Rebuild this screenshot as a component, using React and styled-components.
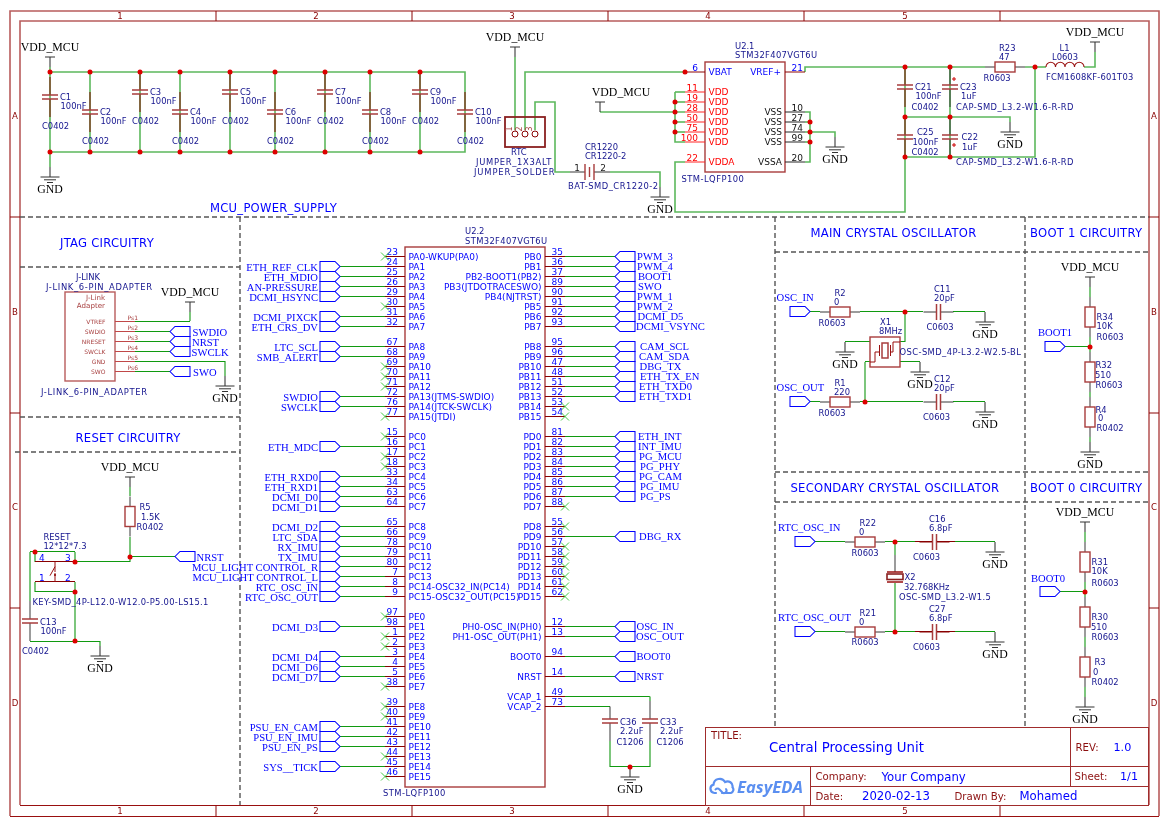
import React from 'react'
import styled, { createGlobalStyle } from 'styled-components'

const Global = createGlobalStyle`
  html, body { margin: 0; padding: 0; background: #fff; }
`
const Page = styled.div`
  position: relative;
  width: 1169px;
  height: 827px;
  overflow: hidden;
  background: #fff;
  filter: blur(0.4px);
`
const Sheet = styled.svg`
  display: block;
`

// sheet text
const PartText = styled.text`
  font: 8.4px "DejaVu Sans", sans-serif;
  fill: #14148e;
  letter-spacing: ${p => p.$spread || 0}px;
`
const PinName = styled.text`
  font: 9px "DejaVu Sans", sans-serif;
  fill: ${p => p.$color || '#0000ff'};
  text-anchor: ${p => p.$anchor || 'start'};
`
const PinNum = styled.text`
  font: 9px "DejaVu Sans", sans-serif;
  fill: ${p => p.$color || '#0000ff'};
  text-anchor: ${p => p.$anchor || 'start'};
`
const NetText = styled.text`
  font: 10.6px "Liberation Serif", serif;
  fill: #0000ff;
  text-anchor: ${p => p.$anchor || 'start'};
`
const PowerText = styled.text`
  font: 11.8px "Liberation Serif", serif;
  fill: #000;
  text-anchor: middle;
`
const Heading = styled.text`
  font: 11.6px "DejaVu Sans", sans-serif;
  fill: #0000ff;
  letter-spacing: 0.25px;
`
const FrameText = styled.text`
  font: 8.6px "DejaVu Sans", sans-serif;
  fill: #880000;
  text-anchor: middle;
`
const AdapterText = styled.text`
  font: ${p => p.$size || 6}px "DejaVu Sans", sans-serif;
  fill: #a84040;
  text-anchor: ${p => p.$anchor || 'end'};
`

// sheet lines: lines on a whole coordinate come out wide and pale, lines on a half one thin and dark
const Wire = styled.polyline`
  fill: none;
  stroke: #5cb85c;
  stroke-width: 1.6;
`
const CrispWire = styled.polyline`
  fill: none;
  stroke: #109a10;
  stroke-width: 1.05;
`
const Pin = styled.line`
  stroke: ${p => p.$color || '#880000'};
  stroke-width: ${p => (p.$crisp ? 1.05 : 1.5)};
  opacity: ${p => (p.$crisp ? 1 : 0.65)};
`
const FrameLine = styled.polyline`
  fill: none;
  stroke: #b85c5c;
  stroke-width: 1.6;
`
const DarkFrameLine = styled.polyline`
  fill: none;
  stroke: #990f0f;
  stroke-width: 1.05;
`
const Dashed = styled.line`
  stroke: #555;
  stroke-width: 1.4;
  stroke-dasharray: 5 3;
`
const Body = styled.rect`
  fill: none;
  stroke: ${p => p.$color || '#a83c3c'};
  stroke-width: ${p => p.$w || 1.4};
`
const PortShape = styled.polygon`
  fill: none;
  stroke: #0000ff;
  stroke-width: 1.05;
`
const Mark = styled.path`
  fill: none;
  stroke: ${p => p.$color || '#990f0f'};
  stroke-width: ${p => p.$w || 1};
`
const Junction = styled.circle`
  fill: #dd0000;
`

// title block, lies over the sheet corner
const TitleBlock = styled.div`
  position: absolute;
  left: 705px;
  top: 727px;
  width: 444px;
  height: 79px;
  box-sizing: border-box;
  display: grid;
  grid-template-columns: 104.5px 260px 1fr;
  grid-template-rows: 39px 20px 1fr;
  border: 1px solid #a02c2c;
  background: #fff;
  font-family: "DejaVu Sans", sans-serif;
`
const Cell = styled.div`
  box-sizing: border-box;
  display: grid;
  align-items: center;
  grid-template-columns: ${p => p.$cols || '1fr'};
  padding-left: ${p => p.$pad || 5}px;
  grid-column: ${p => p.$col};
  grid-row: ${p => p.$row};
  border-right: ${p => (p.$right ? '1px solid #a02c2c' : 'none')};
  border-bottom: ${p => (p.$bottom ? '1px solid #a02c2c' : 'none')};
  min-width: 0;
`
const TitleCell = styled(Cell)`
  align-content: start;
  padding-top: 2px;
`
const Caption = styled.span`
  font-size: 10.2px;
  color: #8c1010;
  white-space: nowrap;
`
const Value = styled.span`
  font-size: ${p => p.$size || 11.7}px;
  color: #0000ff;
  white-space: nowrap;
`
const MainTitle = styled(Value)`
  padding-left: 58px;
  line-height: 15px;
  margin-top: -1px;
`
const LogoCell = styled(Cell)`
  grid-template-columns: 27px 1fr;
  padding-left: 3px;
  gap: 1px;
`
const LogoText = styled.span`
  font: italic 700 16.6px "Open Sans", sans-serif;
  color: #5b8ff0;
`

const Cap = ({ x, y, pin = '#880000', flat, up = 20 }) =>
  flat ? (
    <g>
      <Pin x1={x - 15} y1={y} x2={x - 2} y2={y} $color={pin} />
      <Pin x1={x + 2} y1={y} x2={x + 15} y2={y} $color={pin} />
      <Mark d={`M${x - 2} ${y - 8}V${y + 8}M${x + 2} ${y - 8}V${y + 8}`} $color="#a83c3c" $w={1.5} />
    </g>
  ) : (
    <g>
      <Pin x1={x} y1={y - up} x2={x} y2={y - 2} $color={pin} />
      <Pin x1={x} y1={y + 2} x2={x} y2={y + 20} $color={pin} />
      <Mark d={`M${x - 8} ${y - 2}H${x + 8}M${x - 8} ${y + 2}H${x + 8}`} $color="#a83c3c" $w={1.5} />
    </g>
  )

const Res = ({ x, y, flat }) =>
  flat ? (
    <g>
      <Pin x1={x - 20} y1={y} x2={x - 10} y2={y} $color="#333" />
      <Pin x1={x + 10} y1={y} x2={x + 20} y2={y} $color="#333" />
      <Body x={x - 10} y={y - 5} width={20} height={10} />
    </g>
  ) : (
    <g>
      <Pin x1={x} y1={y - 20} x2={x} y2={y - 10} $color="#333" />
      <Pin x1={x} y1={y + 10} x2={x} y2={y + 20} $color="#333" />
      <Body x={x - 5} y={y - 10} width={10} height={20} />
    </g>
  )

const Gnd = ({ x, y }) => (
  <g>
    <Pin x1={x} y1={y - 10} x2={x} y2={y} $color="#222" />
    <Mark d={`M${x - 9.5} ${y}H${x + 9.5}M${x - 6} ${y + 2.8}H${x + 6}M${x - 3} ${y + 5.5}H${x + 3}`} $color="#333" />
    <PowerText x={x} y={y + 16}>GND</PowerText>
  </g>
)

const Vdd = ({ x, y, tx, ty }) => (
  <g>
    <Pin x1={x} y1={y} x2={x} y2={y + 10} $color="#222" />
    <Mark d={`M${x - 5} ${y}H${x + 5}`} $color="#333" />
    <PowerText x={tx ?? x} y={ty ?? y - 6}>VDD_MCU</PowerText>
  </g>
)

// port with its tip to the right
const PortRight = ({ x, y }) => (
  <PortShape points={`${x - 20},${y - 5} ${x - 5},${y - 5} ${x},${y} ${x - 5},${y + 5} ${x - 20},${y + 5}`} />
)
// port with its tip to the left
const PortLeft = ({ x, y }) => (
  <PortShape points={`${x},${y} ${x + 5},${y - 5} ${x + 20},${y - 5} ${x + 20},${y + 5} ${x + 5},${y + 5}`} />
)
const NoConnect = ({ x, y }) => (
  <Mark d={`M${x - 4} ${y - 4}L${x + 4} ${y + 4}M${x - 4} ${y + 4}L${x + 4} ${y - 4}`} $color="#44cc44" />
)

const LEFT_PINS = [
  [257, [
    ['23', 'PA0-WKUP(PA0)'], ['24', 'PA1', 'ETH_REF_CLK'], ['25', 'PA2', 'ETH_MDIO'], ['26', 'PA3', 'AN-PRESSURE'],
    ['29', 'PA4', 'DCMI_HSYNC'], ['30', 'PA5'], ['31', 'PA6', 'DCMI_PIXCK'], ['32', 'PA7', 'ETH_CRS_DV'],
  ]],
  [347, [
    ['67', 'PA8', 'LTC_SCL'], ['68', 'PA9', 'SMB_ALERT'], ['69', 'PA10'], ['70', 'PA11'], ['71', 'PA12'],
    ['72', 'PA13(JTMS-SWDIO)', 'SWDIO'], ['76', 'PA14(JTCK-SWCLK)', 'SWCLK'], ['77', 'PA15(JTDI)'],
  ]],
  [437, [
    ['15', 'PC0'], ['16', 'PC1', 'ETH_MDC'], ['17', 'PC2'], ['18', 'PC3'], ['33', 'PC4', 'ETH_RXD0'],
    ['34', 'PC5', 'ETH_RXD1'], ['63', 'PC6', 'DCMI_D0'], ['64', 'PC7', 'DCMI_D1'],
  ]],
  [527, [
    ['65', 'PC8', 'DCMI_D2'], ['66', 'PC9', 'LTC_SDA'], ['78', 'PC10', 'RX_IMU'], ['79', 'PC11', 'TX_IMU'],
    ['80', 'PC12', 'MCU_LIGHT CONTROL_R'], ['7', 'PC13', 'MCU_LIGHT CONTROL_L'],
    ['8', 'PC14-OSC32_IN(PC14)', 'RTC_OSC_IN'], ['9', 'PC15-OSC32_OUT(PC15)', 'RTC_OSC_OUT'],
  ]],
  [617, [
    ['97', 'PE0'], ['98', 'PE1', 'DCMI_D3'], ['1', 'PE2'], ['2', 'PE3'], ['3', 'PE4', 'DCMI_D4'],
    ['4', 'PE5', 'DCMI_D6'], ['5', 'PE6', 'DCMI_D7'], ['38', 'PE7'],
  ]],
  [707, [
    ['39', 'PE8'], ['40', 'PE9'], ['41', 'PE10', 'PSU_EN_CAM'], ['42', 'PE11', 'PSU_EN_IMU'],
    ['43', 'PE12', 'PSU_EN_PS'], ['44', 'PE13'], ['45', 'PE14', 'SYS__TICK'], ['46', 'PE15'],
  ]],
]

const RIGHT_PINS = [
  [257, [
    ['35', 'PB0', 'PWM_3', 637], ['36', 'PB1', 'PWM_4', 637], ['37', 'PB2-BOOT1(PB2)', 'BOOT1', 638],
    ['89', 'PB3(JTDOTRACESWO)', 'SWO', 638], ['90', 'PB4(NJTRST)', 'PWM_1', 637], ['91', 'PB5', 'PWM_2', 637],
    ['92', 'PB6', 'DCMI_D5', 637.5], ['93', 'PB7', 'DCMI_VSYNC', 636],
  ]],
  [347, [
    ['95', 'PB8', 'CAM_SCL', 640], ['96', 'PB9', 'CAM_SDA', 639], ['47', 'PB10', 'DBG_TX', 639.5],
    ['48', 'PB11', 'ETH_TX_EN', 640], ['51', 'PB12', 'ETH_TXD0', 639], ['52', 'PB13', 'ETH_TXD1', 639],
    ['53', 'PB14'], ['54', 'PB15'],
  ]],
  [437, [
    ['81', 'PD0', 'ETH_INT', 638], ['82', 'PD1', 'INT_IMU', 638], ['83', 'PD2', 'PG_MCU', 639],
    ['84', 'PD3', 'PG_PHY', 640], ['85', 'PD4', 'PG_CAM', 639], ['86', 'PD5', 'PG_IMU', 640],
    ['87', 'PD6', 'PG_PS', 640], ['88', 'PD7'],
  ]],
  [527, [
    ['55', 'PD8'], ['56', 'PD9', 'DBG_RX', 639], ['57', 'PD10'], ['58', 'PD11'], ['59', 'PD12'],
    ['60', 'PD13'], ['61', 'PD14'], ['62', 'PD15'],
  ]],
  [627, [['12', 'PH0-OSC_IN(PH0)', 'OSC_IN', 636.5], ['13', 'PH1-OSC_OUT(PH1)', 'OSC_OUT', 636]]],
  [657, [['94', 'BOOT0', 'BOOT0', 636.5]]],
  [677, [['14', 'NRST', 'NRST', 636.5]]],
]

const WIRES = [
  // decoupling rails
  '50,67 50,167', '90,72 90,152', '140,72 140,152', '180,72 180,152', '230,72 230,152', '275,72 275,152',
  '325,72 325,152', '370,72 370,152', '420,72 420,152',
  '50,72 465,72 465,152 50,152',
  // rtc jumper and battery
  '515,57 515,130', '525,130 525,72 685,72', '535,130 535,102 555,102 555,172 570,172', '610,172 660,172 660,187',
  // power of the mcu
  '600,112 685,112', '675,92 685,92', '675,92 675,142 685,142', '675,102 685,102', '675,122 685,122', '675,132 685,132',
  '685,162 675,162 675,212 905,212 905,157',
  '805,112 810,112 810,162 805,162', '805,122 810,122', '805,132 835,132 835,137', '805,142 810,142',
  '805,72 805,67 985,67', '905,67 905,157', '950,67 950,157', '905,117 1010,117 1010,122',
  '905,157 1035,157 1035,67 1025,67', '1035,67 1046,67', '1084,67 1095,67 1095,52',
  // verticals of the lower sheet
  '190,321 190,312', '225,361 225,376',
  '130,487 130,496', '130,537 130,562', '35,552 35,562', '75,552 75,562', '30,552 30,601',
  '100,641 100,646', '75,641 75,582', '35,582 35,592',
  '905,312 905,342', '845,342 845,342', '865,362 865,402',
  '1090,287 1090,297', '1090,337 1090,352', '1090,392 1090,397', '1090,437 1090,442',
  '895,542 895,555', '895,583 895,632',
  '1085,532 1085,542', '1085,582 1085,597', '1085,637 1085,647', '1085,687 1085,697',
  '610,741 610,767', '650,741 650,767',
]

const CRISP_WIRES = [
  // jtag
  '135,321.5 190,321.5', '135,331.5 170,331.5', '135,341.5 170,341.5', '135,351.5 170,351.5', '135,361.5 225,361.5', '135,371.5 170,371.5',
  // reset
  '130,556.5 175,556.5', '130,561.5 35,561.5', '35,551.5 75,551.5', '35,551.5 30,551.5', '30,641.5 100,641.5', '35,591.5 75,591.5',
  // main crystal
  '810,311.5 820,311.5', '860,311.5 923,311.5', '953,311.5 985,311.5', '905,341.5 900,341.5',
  '870,341.5 845,341.5', '870,361.5 865,361.5', '900,361.5 920,361.5',
  '810,401.5 820,401.5', '860,401.5 923,401.5', '953,401.5 985,401.5',
  '1065,346.5 1090,346.5',
  // secondary crystal
  '815,541.5 845,541.5', '885,541.5 915,541.5', '955,541.5 995,541.5',
  '815,631.5 845,631.5', '885,631.5 915,631.5', '955,631.5 995,631.5',
  '1060,591.5 1085,591.5',
  // vcap
  '610,766.5 650,766.5', '565,696.5 650,696.5', '565,706.5 610,706.5',
]

const DOTS = [
  [50, 72], [90, 72], [140, 72], [180, 72], [230, 72], [275, 72], [325, 72], [370, 72], [420, 72],
  [50, 152], [90, 152], [140, 152], [180, 152], [230, 152], [275, 152], [325, 152], [370, 152], [420, 152],
  [685, 72], [675, 102], [675, 112], [675, 122], [675, 132], [810, 122], [810, 132], [810, 142],
  [905, 67], [950, 67], [1035, 67], [905, 117], [950, 117], [905, 157], [950, 157],
  [130, 557], [75, 562], [35, 552], [75, 592], [75, 641],
  [905, 312], [865, 402], [1090, 347], [895, 542], [895, 632], [1085, 592], [630, 767],
]

const CAPS = [
  [50, 97], [90, 112], [140, 92], [180, 112], [230, 92], [275, 112], [325, 92], [370, 112], [420, 92], [465, 112],
  [905, 87], [905, 137],
]

const DECOUPLING_TEXT = [
  ['C1', 60, 100], ['C2', 100, 115], ['C3', 150, 95], ['C4', 190, 115], ['C5', 240, 95],
  ['C6', 285, 115], ['C7', 335, 95], ['C8', 380, 115], ['C9', 430, 95], ['C10', 475, 115],
]

// text, x, baseline, extra letter spacing
const LABELS = [
  // rtc and battery
  ['RTC', 511, 155], ['JUMPER_1X3ALT', 476, 165, 0.7], ['JUMPER_SOLDER', 474, 175, 0.85], ['CR1220', 585, 150], ['CR1220-2', 585, 159],
  ['BAT-SMD_CR1220-2', 568, 189, 0.5], ['U2.1', 735, 49], ['STM32F407VGT6U', 735, 58, 0.35], ['STM-LQFP100', 681.5, 182, 0.45],
  // vref
  ['R23', 999, 51], ['47', 999, 60], ['R0603', 983.5, 81], ['L1', 1059.5, 51], ['L0603', 1052, 60],
  ['FCM1608KF-601T03', 1046, 80, 0.2], ['C21', 915, 90], ['100nF', 915.5, 99], ['C0402', 911.5, 110], ['C23', 960, 90],
  ['1uF', 961, 99], ['CAP-SMD_L3.2-W1.6-R-RD', 956, 110, 0.42], ['C25', 917, 135], ['100nF', 912.5, 145], ['C0402', 911.5, 155],
  ['C22', 961.5, 140], ['1uF', 962, 150], ['CAP-SMD_L3.2-W1.6-R-RD', 956, 165, 0.42],
  // jtag
  ['J-LINK', 76, 280], ['J-LINK_6-PIN_ADAPTER', 46, 290, 0.65], ['J-LINK_6-PIN_ADAPTER', 41, 395, 0.65],
  // reset
  ['R5', 139.5, 510], ['1.5K', 141, 520], ['R0402', 136.5, 530], ['RESET', 43.5, 540], ['12*12*7.3', 43.5, 548.5],
  ['KEY-SMD_4P-L12.0-W12.0-P5.00-LS15.1', 32.5, 605, 0.3], ['C13', 40, 625], ['100nF', 40.5, 634], ['C0402', 22, 654],
  // mcu
  ['U2.2', 465, 234], ['STM32F407VGT6U', 465, 243.5, 0.35], ['STM-LQFP100', 383, 796, 0.45],
  ['C36', 620, 725], ['2.2uF', 620, 734], ['C1206', 616.5, 745], ['C33', 660, 725], ['2.2uF', 660, 734], ['C1206', 656.5, 745],
  // main crystal
  ['R2', 834.5, 296], ['0', 834, 305], ['R0603', 818.5, 326], ['C11', 934, 292], ['20pF', 934, 301], ['C0603', 926.5, 330],
  ['X1', 880, 325], ['8MHz', 879, 334], ['OSC-SMD_4P-L3.2-W2.5-BL', 899.5, 355, 0.4],
  ['R1', 834.5, 386], ['220', 834, 395], ['R0603', 818.5, 416], ['C12', 934, 382], ['20pF', 934, 391], ['C0603', 923, 420],
  // boot 1
  ['R34', 1096.5, 320], ['10K', 1096.5, 329], ['R0603', 1096.5, 340], ['R32', 1095.5, 368], ['510', 1095, 378], ['R0603', 1095.5, 388],
  ['R4', 1095.5, 413], ['0', 1098, 421], ['R0402', 1096.5, 431],
  // secondary crystal
  ['R22', 859.5, 526], ['0', 859, 535], ['R0603', 851.5, 555.5], ['C16', 929, 522], ['6.8pF', 929, 531], ['C0603', 913, 560],
  ['X2', 904.5, 580], ['32.768KHz', 904, 589.5], ['OSC-SMD_L3.2-W1.5', 899, 600, 0.35],
  ['R21', 859.5, 616], ['0', 859, 625], ['R0603', 851.5, 645], ['C27', 929, 612], ['6.8pF', 929, 621], ['C0603', 913, 650],
  // boot 0
  ['R31', 1091.5, 565], ['10K', 1091.5, 574], ['R0603', 1091.5, 585.5], ['R30', 1091.5, 620], ['510', 1091, 629.5], ['R0603', 1091.5, 640],
  ['R3', 1094.5, 665], ['0', 1093, 675], ['R0402', 1091.5, 685],
]

const VDD_ROWS = [['11', 92], ['19', 102], ['28', 112], ['50', 122], ['75', 132], ['100', 142]]
const VSS_ROWS = [['10', 112, 'VSS'], ['27', 122, 'VSS'], ['74', 132, 'VSS'], ['99', 142, 'VSS'], ['20', 162, 'VSSA']]
const ADAPTER_ROWS = [['VTREF', 321.5, 'Ps1'], ['SWDIO', 331.5, 'Ps2'], ['NRESET', 341.5, 'Ps3'], ['SWCLK', 351.5, 'Ps4'], ['GND', 361.5, 'Ps5'], ['SWO', 371.5, 'Ps6']]

const HeadingRows = [
  ['MCU_POWER_SUPPLY', 210, 212], ['JTAG CIRCUITRY', 60, 246.5], ['RESET CIRCUITRY', 75.5, 441.5],
  ['MAIN CRYSTAL OSCILLATOR', 810.5, 236.5], ['BOOT 1 CIRCUITRY', 1030, 236.5],
  ['SECONDARY CRYSTAL OSCILLATOR', 790.5, 491.5], ['BOOT 0 CIRCUITRY', 1030, 491.5],
]

const DASHES = [
  [20, 217, 1149, 217], [20, 267, 240, 267], [20, 417, 240, 417], [15, 452, 240, 452], [240, 217, 240, 805],
  [775, 217, 775, 727], [1025, 217, 1025, 727], [775, 252, 1149, 252], [775, 472, 1149, 472], [775, 502, 1149, 502],
]

const Frame = () => (
  <g>
    <FrameLine points="10,816 10,11 1159,11 1159,816" />
    <FrameLine points="20,805 20,21 1149,21 1149,805" />
    <DarkFrameLine points="10,816.5 1159,816.5" />
    <DarkFrameLine points="20,805.5 1149,805.5" />
    {[216, 412, 608, 804, 1000].map(x => (
      <g key={x}>
        <Pin x1={x} y1={11} x2={x} y2={21} />
        <Pin x1={x} y1={805.5} x2={x} y2={816.5} />
      </g>
    ))}
    {[217, 413, 608].map(y => (
      <g key={y}>
        <Pin x1={10} y1={y} x2={20} y2={y} />
        <Pin x1={1149} y1={y} x2={1159} y2={y} />
      </g>
    ))}
    {[120, 316, 512, 708, 905].map((x, i) => (
      <g key={x}>
        <FrameText x={x} y={19}>{i + 1}</FrameText>
        <FrameText x={x} y={814}>{i + 1}</FrameText>
      </g>
    ))}
    {['A', 'B', 'C', 'D'].map((r, i) => (
      <g key={r}>
        <FrameText x={15} y={119 + i * 195.7}>{r}</FrameText>
        <FrameText x={1154} y={119 + i * 195.7}>{r}</FrameText>
      </g>
    ))}
  </g>
)

const McuPins = () => (
  <g>
    <Body x={405} y={247} width={140} height={540} />
    {LEFT_PINS.map(([start, pins]) =>
      pins.map(([num, name, net], i) => {
        const y = start - 0.5 + i * 10
        return (
          <g key={num}>
            {net && <CrispWire points={`340,${y} 385,${y}`} />}
            <Pin x1={385} y1={y} x2={405} y2={y} $crisp />
            <PinNum x={398} y={y - 1.5} $anchor="end">{num}</PinNum>
            <PinName x={408.5} y={y + 3}>{name}</PinName>
            {net ? (
              <g>
                <PortRight x={340} y={y} />
                <NetText x={318} y={y + 4.5} $anchor="end">{net}</NetText>
              </g>
            ) : (
              <NoConnect x={385} y={y} />
            )}
          </g>
        )
      })
    )}
    {RIGHT_PINS.map(([start, pins]) =>
      pins.map(([num, name, net, tx], i) => {
        const y = start - 0.5 + i * 10
        return (
          <g key={num}>
            {net && <CrispWire points={`565,${y} 615,${y}`} />}
            <Pin x1={545} y1={y} x2={565} y2={y} $crisp />
            <PinNum x={551.5} y={y - 1.5}>{num}</PinNum>
            <PinName x={541.5} y={y + 3} $anchor="end">{name}</PinName>
            {net ? (
              <g>
                <PortLeft x={615} y={y} />
                <NetText x={tx} y={y + 3.5}>{net}</NetText>
              </g>
            ) : (
              <NoConnect x={565} y={y} />
            )}
          </g>
        )
      })
    )}
    <Wire points="650,696.5 650,701" />
    <Pin x1={545} y1={696.5} x2={565} y2={696.5} $crisp />
    <Pin x1={545} y1={706.5} x2={565} y2={706.5} $crisp />
    <PinNum x={551.5} y={695}>49</PinNum>
    <PinNum x={551.5} y={705}>73</PinNum>
    <PinName x={541.5} y={699.5} $anchor="end">VCAP_1</PinName>
    <PinName x={541.5} y={709.5} $anchor="end">VCAP_2</PinName>
    <Cap x={610} y={721} pin="#333" up={14.5} />
    <Cap x={650} y={721} pin="#333" />
    <Gnd x={630} y={777} />
  </g>
)

const PowerMcu = () => (
  <g>
    <Body x={705} y={62} width={80} height={110} />
    <Pin x1={685} y1={72} x2={705} y2={72} />
    <Pin x1={785} y1={72} x2={805} y2={72} />
    <Pin x1={685} y1={162} x2={705} y2={162} $color="#ff2222" />
    <PinNum x={698} y={70.5} $anchor="end">6</PinNum>
    <PinNum x={791.5} y={70.5}>21</PinNum>
    <PinNum x={698} y={160.5} $anchor="end" $color="#ff0000">22</PinNum>
    <PinName x={708.5} y={75}>VBAT</PinName>
    <PinName x={781} y={75} $anchor="end">VREF+</PinName>
    <PinName x={708.5} y={165} $color="#ff0000">VDDA</PinName>
    {VDD_ROWS.map(([num, y]) => (
      <g key={num}>
        <Pin x1={685} y1={y} x2={705} y2={y} $color="#ff2222" />
        <PinNum x={698} y={y - 1.5} $anchor="end" $color="#ff0000">{num}</PinNum>
        <PinName x={708.5} y={y + 3} $color="#ff0000">VDD</PinName>
      </g>
    ))}
    {VSS_ROWS.map(([num, y, name]) => (
      <g key={num}>
        <Pin x1={785} y1={y} x2={805} y2={y} $color="#222" />
        <PinNum x={791.5} y={y - 1.5} $color="#111">{num}</PinNum>
        <PinName x={782} y={y + 3} $anchor="end" $color="#111">{name}</PinName>
      </g>
    ))}
  </g>
)

const RtcJumper = () => (
  <g>
    <Body x={505} y={117} width={40} height={30} $w={1.8} $color="#8a2020" />
    {[515, 525, 535].map((x, i) => (
      <g key={x}>
        <circle cx={x} cy={134} r={3} fill="#fff" stroke="#880000" />
        <AdapterText $size={8} $anchor="middle" transform={`translate(${x - 3} 129) rotate(-90)`}>{i + 1}</AdapterText>
      </g>
    ))}
    <Pin x1={570} y1={172} x2={585} y2={172} $color="#333" />
    <Pin x1={594} y1={172} x2={610} y2={172} $color="#333" />
    <Mark d="M585 164V180M589.5 167V177M594 164V180" $color="#a83c3c" $w={1.4} />
    <PinNum x={577} y={170.5} $anchor="middle" $color="#222">1</PinNum>
    <PinNum x={603} y={170.5} $anchor="middle" $color="#222">2</PinNum>
    <Gnd x={660} y={197} />
    <Vdd x={515} y={47} ty={41} />
    <Vdd x={600} y={102} tx={621} ty={96} />
  </g>
)

const VrefFilter = () => (
  <g>
    <Cap x={950} y={87} pin="#333" />
    <Cap x={950} y={137} pin="#333" />
    <Mark d="M952 79H956M954 77V81M952 145H956M954 143V147" $color="#cc0000" />
    <Res x={1005} y={67} flat />
    <Mark d="M1046 67a4.7 4.7 0 0 1 9.5 0a4.7 4.7 0 0 1 9.5 0a4.7 4.7 0 0 1 9.5 0a4.7 4.7 0 0 1 9.5 0" $w={1.1} />
    <Vdd x={1095} y={42} ty={36} />
    <Gnd x={835} y={147} />
    <Gnd x={1010} y={132} />
  </g>
)

const Jtag = () => (
  <g>
    <Body x={65} y={292} width={50} height={89} $color="#b85c5c" />
    <AdapterText $size={7.1} x={105} y={300}>J-Link</AdapterText>
    <AdapterText $size={7.1} x={105} y={308}>Adapter</AdapterText>
    {ADAPTER_ROWS.map(([name, y, ps]) => (
      <g key={name}>
        <Pin x1={115} y1={y} x2={135} y2={y} $color="#c04848" $crisp />
        <AdapterText x={105.5} y={y + 2.5}>{name}</AdapterText>
        <AdapterText x={127.5} y={y - 1.5} $anchor="start">{ps}</AdapterText>
      </g>
    ))}
    <PortLeft x={170} y={331.5} />
    <PortLeft x={170} y={341.5} />
    <PortLeft x={170} y={351.5} />
    <PortLeft x={170} y={371.5} />
    <NetText x={192.5} y={336}>SWDIO</NetText>
    <NetText x={192} y={346}>NRST</NetText>
    <NetText x={191.5} y={356}>SWCLK</NetText>
    <NetText x={193} y={376}>SWO</NetText>
    <Vdd x={190} y={302} ty={296} />
    <Gnd x={225} y={386} />
  </g>
)

const ResetSwitch = () => (
  <g>
    <Res x={130} y={516.5} />
    <Vdd x={130} y={477} ty={471} />
    <Pin x1={35} y1={561.5} x2={75} y2={561.5} $crisp />
    <Pin x1={35} y1={581.5} x2={75} y2={581.5} $crisp />
    <Mark d="M55 562V572M50 575.7L55 566.7M55 573V582" />
    <circle cx={55} cy={575} r={1} fill="#880000" />
    <Cap x={30} y={621} pin="#333" />
    <PortLeft x={175} y={556.5} />
    <NetText x={196.5} y={561}>NRST</NetText>
    <PinNum x={39} y={561}>4</PinNum>
    <PinNum x={65} y={561}>3</PinNum>
    <PinNum x={39} y={581}>1</PinNum>
    <PinNum x={65} y={581}>2</PinNum>
    <Gnd x={100} y={656} />
  </g>
)

const MainCrystal = () => (
  <g>
    <PortRight x={810} y={311.5} />
    <PortRight x={810} y={401.5} />
    <NetText x={776.5} y={301}>OSC_IN</NetText>
    <NetText x={776.5} y={391}>OSC_OUT</NetText>
    <Res x={840} y={312} flat />
    <Res x={840} y={402} flat />
    <Cap x={938.5} y={312} pin="#333" flat />
    <Cap x={938.5} y={402} pin="#333" flat />
    <Gnd x={985} y={322} />
    <Gnd x={985} y={412} />
    <Gnd x={845} y={352} />
    <Gnd x={920} y={372} />
    <Body x={870} y={337} width={30} height={30} />
    <Body x={882} y={343} width={6} height={15} $w={1.5} />
    <Mark d="M879.5 345V356M890.5 345V356M870 362H875V352H879M900 342H893V352H890" />
  </g>
)

const SecondaryCrystal = () => (
  <g>
    <PortRight x={815} y={541.5} />
    <PortRight x={815} y={631.5} />
    <NetText x={778} y={531}>RTC_OSC_IN</NetText>
    <NetText x={778} y={621}>RTC_OSC_OUT</NetText>
    <Res x={865} y={542} flat />
    <Res x={865} y={632} flat />
    <Cap x={934.5} y={542} flat />
    <Cap x={934.5} y={632} flat />
    <Pin x1={915} y1={541.5} x2={932} y2={541.5} $crisp />
    <Pin x1={915} y1={631.5} x2={932} y2={631.5} $crisp />
    <Pin x1={937} y1={541.5} x2={955} y2={541.5} $crisp />
    <Pin x1={937} y1={631.5} x2={955} y2={631.5} $crisp />
    <Pin x1={895} y1={555} x2={895} y2={572} $color="#333" />
    <Mark d="M887 572H903M887 582H903" $w={1.3} />
    <Body x={887} y={574} width={16} height={5.5} $w={1.6} $color="#8a2020" />
    <Gnd x={995} y={552} />
    <Gnd x={995} y={642} />
  </g>
)

const Divider = ({ x, port, portY, label, labelX, labelY, y1, y2, y3, gnd, power, powerText }) => (
  <g>
    <Vdd x={x} y={power} ty={powerText} />
    <Res x={x} y={y1} />
    <Res x={x} y={y2} />
    <Res x={x} y={y3} />
    <PortRight x={port} y={portY} />
    <NetText x={labelX} y={labelY}>{label}</NetText>
    <Gnd x={x} y={gnd} />
  </g>
)

const CloudMark = () => (
  <svg width="26" height="19" viewBox="0 0 26 19">
    <path
      d="M7 16H5.5a4.3 4.3 0 0 1-1-8.4 6.2 6.2 0 0 1 11.6-2.6 5 5 0 0 1 7.4 5.2 3.6 3.6 0 0 1-1.6 5.8H13"
      fill="none"
      stroke="#5b8ff0"
      strokeWidth="2.2"
      strokeLinecap="round"
    />
    <path
      d="M6.5 12.5a2.5 2.5 0 0 1 4 0l2.5 2.5a2.5 2.5 0 0 0 4-3"
      fill="none"
      stroke="#5b8ff0"
      strokeWidth="2"
      strokeLinecap="round"
    />
  </svg>
)

const App = () => (
  <Page>
    <Global />
    <Sheet width="1169" height="827" viewBox="0 0 1169 827">
      <Frame />
      {DASHES.map(([x1, y1, x2, y2]) => (
        <Dashed key={`${x1}-${y1}-${x2}`} x1={x1} y1={y1} x2={x2} y2={y2} />
      ))}
      {HeadingRows.map(([text, x, y]) => (
        <Heading key={text} x={x} y={y}>{text}</Heading>
      ))}
      {WIRES.map(points => (
        <Wire key={points} points={points} />
      ))}
      {CRISP_WIRES.map(points => (
        <CrispWire key={points} points={points} />
      ))}
      {CAPS.map(([x, y]) => (
        <Cap key={`${x}-${y}`} x={x} y={y} />
      ))}
      <Gnd x={50} y={177} />
      <Vdd x={50} y={57} />
      <RtcJumper />
      <PowerMcu />
      <VrefFilter />
      <Jtag />
      <ResetSwitch />
      <McuPins />
      <MainCrystal />
      <SecondaryCrystal />
      <Divider x={1090} power={277} powerText={271} y1={317} y2={372} y3={417} port={1065} portY={346.5} label="BOOT1" labelX={1038} labelY={336} gnd={452} />
      <Divider x={1085} power={522} powerText={516} y1={562} y2={617} y3={667} port={1060} portY={591.5} label="BOOT0" labelX={1031} labelY={582} gnd={707} />
      {DECOUPLING_TEXT.map(([name, x, y]) => (
        <g key={name}>
          <PartText x={x} y={y}>{name}</PartText>
          <PartText x={x + 0.5} y={y + 9}>100nF</PartText>
          <PartText x={x - 18} y={y + 29}>C0402</PartText>
        </g>
      ))}
      {LABELS.map(([text, x, y, spread]) => (
        <PartText key={`${text}-${x}-${y}`} x={x} y={y} $spread={spread}>{text}</PartText>
      ))}
      {DOTS.map(([x, y]) => (
        <Junction key={`${x}-${y}`} cx={x} cy={y} r={2.5} />
      ))}
    </Sheet>
    <TitleBlock>
      <TitleCell $col="1 / 3" $row="1" $right $bottom>
        <Caption>TITLE:</Caption>
        <MainTitle $size={13.3}>Central Processing Unit</MainTitle>
      </TitleCell>
      <Cell $col="3" $row="1" $bottom $cols="38px 1fr">
        <Caption>REV:</Caption>
        <Value $size={11.2}>1.0</Value>
      </Cell>
      <LogoCell $col="1" $row="2 / 4" $right>
        <CloudMark />
        <LogoText>EasyEDA</LogoText>
      </LogoCell>
      <Cell $col="2" $row="2" $right $bottom $cols="66px 1fr">
        <Caption>Company:</Caption>
        <Value>Your Company</Value>
      </Cell>
      <Cell $col="3" $row="2" $bottom $pad={4} $cols="45.5px 1fr">
        <Caption>Sheet:</Caption>
        <Value $size={11.2}>1/1</Value>
      </Cell>
      <Cell $col="2 / 4" $row="3" $cols="46.5px 92.5px 65px 1fr">
        <Caption>Date:</Caption>
        <Value>2020-02-13</Value>
        <Caption>Drawn By:</Caption>
        <Value>Mohamed</Value>
      </Cell>
    </TitleBlock>
  </Page>
)

export default App
